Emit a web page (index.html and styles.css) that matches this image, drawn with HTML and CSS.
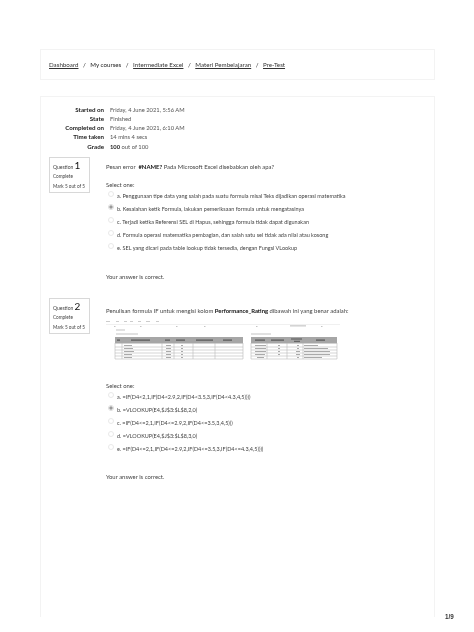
FILE: index.html
```html
<!DOCTYPE html>
<html lang="id">
<head>
<meta charset="utf-8">
<title>Pre-Test</title>
<link rel="stylesheet" href="styles.css">
</head>
<body>
<div class="page">
  <nav class="crumbs">
    <a>Dashboard</a><i>/</i><span>My courses</span><i>/</i><a>Intermediate Excel</a><i>/</i><a>Materi Pembelajaran</a><i>/</i><a>Pre-Test</a>
  </nav>
  <main class="card">
    <dl class="summary">
      <div class="sum-row"><dt>Started on</dt><dd>Friday, 4 June 2021, 5:56 AM</dd></div>
      <div class="sum-row"><dt>State</dt><dd>Finished</dd></div>
      <div class="sum-row"><dt>Completed on</dt><dd>Friday, 4 June 2021, 6:10 AM</dd></div>
      <div class="sum-row"><dt>Time taken</dt><dd>14 mins 4 secs</dd></div>
      <div class="sum-row"><dt>Grade</dt><dd><b>100</b> out of 100</dd></div>
    </dl>

    <section class="question q1">
      <aside class="info">
        <div class="qno">Question <b>1</b></div>
        <div class="meta">Complete</div>
        <div class="meta">Mark 5 out of 5</div>
      </aside>
      <div class="content">
        <p class="prompt">Pesan error &nbsp;<b>#NAME?</b> Pada Microsoft Excel disebabkan oleh apa?</p>
        <p class="select">Select one:</p>
        <ul class="opts">
          <li><span class="radio"></span>a. Penggunaan tipe data yang salah pada suatu formula misal Teks dijadikan operasi matematika</li>
          <li><span class="radio on"></span>b. Kesalahan ketik Formula, lakukan pemeriksaan formula untuk mengatasinya</li>
          <li><span class="radio"></span>c. Terjadi ketika Referensi SEL di Hapus, sehingga formula tidak dapat digunakan</li>
          <li><span class="radio"></span>d. Formula operasi matematika pembagian, dan salah satu sel tidak ada nilai atau kosong</li>
          <li><span class="radio"></span>e. SEL yang dicari pada table lookup tidak tersedia, dengan Fungsi VLookup</li>
        </ul>
        <p class="feedback">Your answer is correct.</p>
      </div>
    </section>

    <section class="question q2">
      <aside class="info">
        <div class="qno">Question <b>2</b></div>
        <div class="meta">Complete</div>
        <div class="meta">Mark 5 out of 5</div>
      </aside>
      <div class="content">
        <p class="prompt">Penulisan formula IF untuk mengisi kolom <b>Performance_Rating</b> dibawah ini yang benar adalah:</p>
        <svg class="sheet" viewBox="0 0 234 42" width="234" height="42" role="img" aria-label="Spreadsheet">
          <g fill="#ccc">
            <rect x="0" y="2" width="4" height="1"/><rect x="10" y="2" width="3" height="1"/><rect x="18" y="2" width="3" height="1"/><rect x="24" y="2" width="3" height="1"/><rect x="32" y="2" width="3" height="1"/><rect x="40" y="2" width="4" height="1"/><rect x="50" y="2" width="3" height="1"/>
          </g>
          <rect x="0" y="5" width="234" height="1" fill="#f0f0f0"/>
          <rect x="184" y="6" width="16" height="1.6" fill="#d4d4d4"/>
          <g fill="#c4c4c4">
            <rect x="8" y="7" width="1.5" height="1"/><rect x="34" y="7" width="1.5" height="1"/><rect x="70" y="7" width="1.5" height="1"/><rect x="98" y="7" width="1.5" height="1"/><rect x="150" y="7" width="1.5" height="1"/><rect x="215" y="7" width="1.5" height="1"/>
            <rect x="10" y="10.5" width="9" height="1"/><rect x="10" y="14.5" width="22" height="1"/><rect x="145" y="14.5" width="20" height="1"/>
          </g>
          <g fill="#a6a6a6">
            <rect x="9" y="18" width="128" height="6.5"/><rect x="145" y="18" width="86" height="6.5"/>
          </g>
          <g fill="#555">
            <rect x="11" y="20.5" width="3" height="1.2"/><rect x="25" y="20.5" width="19" height="1.2"/><rect x="59" y="20.5" width="5" height="1.2"/><rect x="70" y="20.5" width="9" height="1.2"/><rect x="90" y="20.5" width="17" height="1.2"/><rect x="117" y="20.5" width="9" height="1.2"/>
            <rect x="149" y="20.5" width="10" height="1.2"/><rect x="165" y="20.5" width="13" height="1.2"/><rect x="185" y="19.5" width="11" height="1"/><rect x="188" y="21.8" width="6" height="1"/><rect x="210" y="20.5" width="9" height="1.2"/>
          </g>
          <g fill="#aaa">
            <rect x="18" y="26" width="8" height="1"/><rect x="18" y="29" width="9" height="1"/><rect x="18" y="32" width="10" height="1"/><rect x="18" y="35" width="8" height="1"/><rect x="18" y="38" width="8" height="1"/>
            <rect x="60" y="26" width="5" height="1"/><rect x="60" y="29" width="5" height="1"/><rect x="60" y="32" width="5" height="1"/><rect x="60" y="35" width="5" height="1"/><rect x="60" y="38" width="5" height="1"/>
            <rect x="75" y="26" width="2" height="1"/><rect x="75" y="29" width="2" height="1"/><rect x="75" y="32" width="2" height="1"/><rect x="75" y="35" width="2" height="1"/><rect x="75" y="38" width="2" height="1"/>
            <rect x="149" y="26" width="11" height="1"/><rect x="149" y="29" width="11" height="1"/><rect x="149" y="32" width="11" height="1"/><rect x="149" y="35" width="10" height="1"/><rect x="151" y="38" width="7" height="1"/>
            <rect x="172" y="26" width="2" height="1"/><rect x="172" y="29" width="2" height="1"/><rect x="172" y="32" width="2" height="1"/><rect x="172" y="35" width="2" height="1"/>
            <rect x="191" y="26" width="2" height="1"/><rect x="191" y="29" width="2" height="1"/><rect x="190" y="32" width="4" height="1"/><rect x="190" y="35" width="4" height="1"/><rect x="191" y="38" width="2" height="1"/>
            <rect x="198" y="26" width="14" height="1"/><rect x="198" y="29" width="24" height="1"/><rect x="198" y="32" width="26" height="1"/><rect x="198" y="35" width="26" height="1"/><rect x="198" y="38" width="18" height="1"/>
          </g>
          <g stroke="#bbb" stroke-width=".6" fill="none">
            <path d="M9 28h128M9 31h128M9 34h128M9 37h128M9 40h128M145 28h86M145 31h86M145 34h86M145 37h86M145 40h86"/>
            <path d="M9 24v16M16 24v16M56 24v16M68 24v16M87 24v16M109 24v16M137 24v16M145 24v16M161 24v16M181 24v16M197 24v16M231 24v16"/>
          </g>
        </svg>
        <p class="select">Select one:</p>
        <ul class="opts">
          <li><span class="radio"></span>a. =IF(D4&lt;2,1,IF(D4&lt;2.9,2,IF(D4&lt;3.5,3,IF(D4&lt;4.3,4,5))))</li>
          <li><span class="radio on"></span>b. =VLOOKUP(E4,$J$3:$L$8,2,0)</li>
          <li><span class="radio"></span>c. =IF(D4&lt;=2,1,IF(D4&lt;=2.9,2,IF(D4&lt;=3.5,3,4,5)))</li>
          <li><span class="radio"></span>d. =VLOOKUP(E4,$J$3:$L$8,3,0)</li>
          <li><span class="radio"></span>e. =IF(D4&lt;=2,1,IF(D4&lt;=2.9,2,IF(D4&lt;=3.5,3,IF(D4&lt;=4.3,4,5))))</li>
        </ul>
        <p class="feedback">Your answer is correct.</p>
      </div>
    </section>
  </main>
  <div class="pager">1/9</div>
</div>
</body>
</html>
```

FILE: styles.css
```css
* { box-sizing: border-box; }
html, body { margin: 0; padding: 0; background: #fff; }
body {
  width: 474px;
  height: 632px;
  overflow: hidden;
  font-family: Lato, "Open Sans", "Liberation Sans", sans-serif;
  font-size: 6.2px;
  line-height: 9px;
  color: #444;
}
.page {
  position: relative;
  height: 632px;
  padding: 49px 39px 0 40px;
  filter: blur(0.45px);
}
.crumbs {
  height: 31px;
  border: 1px solid #f3f3f3;
  padding: 0 8px;
  display: flex;
  align-items: center;
  font-size: 6.2px;
  color: #222;
}
.crumbs a { text-decoration: underline; color: #333; }
.crumbs i { font-style: normal; margin: 0 4.5px; }
.card {
  margin-top: 16px;
  height: 521px;
  border: 1px solid #f3f3f3;
  border-bottom: 0;
  padding: 8px 8px 0;
}
.summary { margin: 0; }
.sum-row { display: flex; height: 9.15px; line-height: 9.15px; }
.summary dt { width: 55px; text-align: right; font-weight: 700; color: #222; }
.summary dd { margin: 0 0 0 6px; color: #555; font-size: 5.8px; }
.summary dd b { color: #222; }
.question { display: flex; align-items: flex-start; }
.q1 { margin-top: 6px; height: 141px; }
.info {
  width: 41px;
  height: 36px;
  flex: none;
  border: 1px solid #d8d8d8;
  padding: 2px 3px;
  font-size: 4.7px;
  color: #444;
}
.qno { line-height: 10px; height: 11px; font-size: 5px; }
.qno b { font-size: 10px; font-weight: 400; color: #111; }
.meta { line-height: 10px; height: 10px; }
.content { margin-left: 16px; flex: 1; min-width: 0; }
.prompt { margin: 0; color: #444; white-space: nowrap; font-size: 5.9px; }
.prompt b { color: #111; }
.select { margin: 0; font-size: 5.9px; }
.opts { list-style: none; margin: 0; padding: 0; }
.opts li { display: flex; align-items: center; height: 13px; white-space: nowrap; font-size: 5.5px; color: #444; padding-left: 2px; }
.radio {
  width: 6px;
  height: 6px;
  flex: none;
  margin: -4px 3px 0 0;
  border-radius: 50%;
  border: 1px solid #e8e8e8;
  background: #fff;
}
.radio.on { background: radial-gradient(circle, #999 0 1.4px, #fff 1.9px); border-color: #ddd; }
.feedback { margin: 0; font-size: 5.9px; color: #444; }
.q1 .prompt { margin-top: 5px; }
.q1 .select { margin-top: 9px; }
.q1 .opts { margin-top: 1px; }
.q1 .feedback { margin-top: 17px; }
.q2 .prompt { margin-top: 8px; }
.sheet { display: block; margin-top: 4px; }
.q2 .select { margin-top: 20px; }
.q2 .opts { margin-top: 1px; }
.q2 .feedback { margin-top: 16px; }
.pager {
  position: absolute;
  left: 445px;
  top: 612px;
  font-family: "Liberation Sans", sans-serif;
  font-size: 6.3px;
  font-weight: 700;
  color: #333;
}
```
